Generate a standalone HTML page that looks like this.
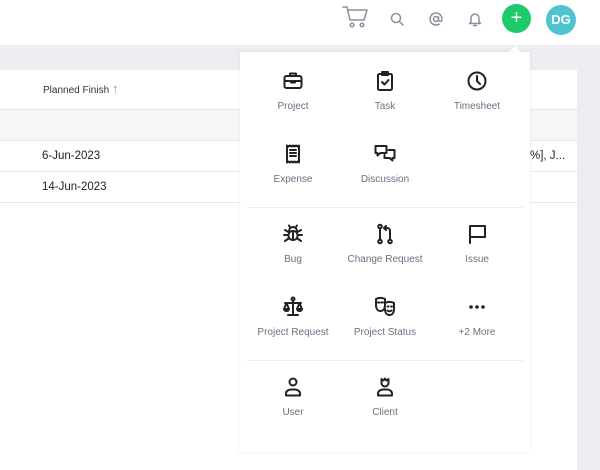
<!DOCTYPE html>
<html><head><meta charset="utf-8"><style>
*{margin:0;padding:0;box-sizing:border-box}
body{width:600px;height:433px;overflow:hidden;background:#ececf1;font-family:"Liberation Sans",sans-serif;position:relative}
.hdr{position:absolute;left:0;top:0;width:600px;height:45px;background:#fff}
.panel{position:absolute;left:0;top:70px;width:577px;height:400px;background:#fff}
.row{position:absolute;left:0;width:577px;border-bottom:1px solid #e6e6ec;font-size:11.5px;color:#222}
.dd{position:absolute;left:240px;top:52px;width:290px;height:400px;background:#fff;box-shadow:0 0 3px rgba(0,0,0,.08)}
.arrow{position:absolute;left:508px;top:46px;width:0;height:0;border-left:7px solid transparent;border-right:7px solid transparent;border-bottom:7px solid #fff}
.it{position:absolute;width:92px;text-align:center;font-size:10px;color:#6b7080}
.it svg{display:block;margin:0 auto 9px;width:22px;height:22px}
.sep{position:absolute;left:7px;width:276px;height:1px;background:#ececf2}
svg{fill:none;stroke:#222;stroke-width:2;stroke-linecap:round;stroke-linejoin:round}
</style></head><body>
<div class="hdr">
<svg style="position:absolute;left:342px;top:5px;width:27px;height:24px;stroke:#8a8f9e;stroke-width:1.5" viewBox="0 0 27 24"><path d="M1 2h4l3 13h14l3-10H7"/><circle cx="10" cy="20" r="1.8"/><circle cx="20" cy="20" r="1.8"/></svg>
<svg style="position:absolute;left:390px;top:12px;width:14px;height:14px;stroke:#8a8f9e;stroke-width:1.5" viewBox="0 0 14 14"><circle cx="6" cy="6" r="4.5"/><path d="M9.5 9.5L13 13"/></svg>
<svg style="position:absolute;left:429px;top:12px;width:14px;height:14px;stroke:#8a8f9e;stroke-width:1.5" viewBox="0 0 14 14"><circle cx="7" cy="7" r="2.5"/><path d="M9.5 5v3a1.8 1.8 0 0 0 3.5 0V7A6 6 0 1 0 10 12.2"/></svg>
<svg style="position:absolute;left:468px;top:11px;width:14px;height:16px;stroke:#8a8f9e;stroke-width:1.5" viewBox="0 0 14 16"><path d="M3 11V7a4 4 0 0 1 8 0v4l1.5 1.5h-11z"/><path d="M5.5 14.5h3"/></svg>
<div style="position:absolute;left:502px;top:4px;width:29px;height:29px;border-radius:50%;background:#1ecb6b;color:#fff;text-align:center;line-height:28px;font-size:20px;font-weight:300">+</div>
<div style="position:absolute;left:546px;top:5px;width:30px;height:30px;border-radius:50%;background:#4fc3d0;color:#fff;text-align:center;line-height:30px;font-size:13px;font-weight:bold">DG</div>
</div>
<div class="panel"></div>
<div class="row" style="top:70px;height:40px"><span style="position:absolute;left:43px;top:11px;font-size:10px;color:#333">Planned Finish <span style="color:#999;font-size:13px">↑</span></span></div>
<div class="row" style="top:110px;height:31px;background:#f6f6f9"></div>
<div class="row" style="top:141px;height:31px"><span style="position:absolute;left:42px;top:9px">6-Jun-2023</span><span style="position:absolute;left:530px;top:9px">%], J...</span></div>
<div class="row" style="top:172px;height:31px"><span style="position:absolute;left:42px;top:9px">14-Jun-2023</span></div>
<div class="arrow"></div>
<div class="dd">
<div class="it" style="left:7px;top:18px"><svg viewBox="0 0 22 22"><rect x="2.5" y="6" width="17" height="12" rx="2"/><path d="M8 6V3.5h6V6M2.5 11h17M9 11v1.5h4V11"/></svg>Project</div>
<div class="it" style="left:99px;top:18px"><svg viewBox="0 0 22 22"><rect x="4" y="4" width="14" height="16" rx="1.5"/><rect x="8" y="2" width="6" height="3"/><path d="M8 12l2.5 2.5L14.5 10"/></svg>Task</div>
<div class="it" style="left:191px;top:18px"><svg viewBox="0 0 22 22"><circle cx="11" cy="11" r="8.5"/><path d="M11 6v5l3 3"/></svg>Timesheet</div>
<div class="it" style="left:7px;top:91px"><svg viewBox="0 0 22 22"><path d="M5 2.5l1.5 1 1.5-1 1.5 1 1.5-1 1.5 1 1.5-1 1.5 1 1.5-1v17l-1.5-1-1.5 1-1.5-1-1.5 1-1.5-1-1.5 1-1.5-1-1.5 1z"/><path d="M8 7h6M8 10h6M8 13h6"/></svg>Expense</div>
<div class="it" style="left:99px;top:91px"><svg viewBox="0 0 22 22"><path d="M1.5 3h11v7h-6l-3 2.5V10h-2z"/><path d="M14.5 7h6v8h-2v2.5l-3-2.5h-5v-3"/></svg>Discussion</div>
<div class="sep" style="top:155px"></div>
<div class="it" style="left:7px;top:171px"><svg viewBox="0 0 22 22"><path d="M7 8a4 4 0 0 1 8 0"/><rect x="6.5" y="8" width="9" height="9" rx="4"/><path d="M11 8v9M2 12h4.5M15.5 12H20M3 7l3.5 2M19 7l-3.5 2M3 18l3.5-2.5M19 18l-3.5-2.5M8 4L7 2.5M14 4l1-1.5"/></svg>Bug</div>
<div class="it" style="left:99px;top:171px"><svg viewBox="0 0 22 22"><circle cx="6" cy="3.5" r="1.8"/><circle cx="6" cy="18.5" r="1.8"/><circle cx="16" cy="18.5" r="1.8"/><path d="M6 5.5v11M16 16.5V8a3 3 0 0 0-3-3h-3M12 3l-2 2 2 2"/></svg>Change Request</div>
<div class="it" style="left:191px;top:171px"><svg viewBox="0 0 22 22"><path d="M4 20V3h15v11H4"/></svg>Issue</div>
<div class="it" style="left:7px;top:244px"><svg viewBox="0 0 22 22"><circle cx="11" cy="3" r="1.5"/><path d="M11 4.5V19M6 19h10M3 7h16M4.5 7L2 13h5zM17.5 7L15 13h5zM2 13a2.5 2 0 0 0 5 0M15 13a2.5 2 0 0 0 5 0"/></svg>Project Request</div>
<div class="it" style="left:99px;top:244px"><svg viewBox="0 0 22 22"><path d="M2 3c3-1.5 6-1.5 9 0v6c0 4-2 6-4.5 6S2 13 2 9z"/><path d="M11 7c3-1.5 6-1.5 9 0v6c0 4-2 6-4.5 6S11 17 11 13"/><path d="M13.5 14.5a3 3 0 0 0 4 0M13.5 10.5h1M17 10.5h1M4 6.5h1.5M7.5 6.5H9"/></svg>Project Status</div>
<div class="it" style="left:191px;top:244px"><svg viewBox="0 0 22 22" style="fill:#222;stroke:none"><circle cx="5" cy="11" r="1.8"/><circle cx="11" cy="11" r="1.8"/><circle cx="17" cy="11" r="1.8"/></svg>+2 More</div>
<div class="sep" style="top:308px"></div>
<div class="it" style="left:7px;top:324px"><svg viewBox="0 0 22 22"><circle cx="11" cy="6" r="3.5"/><path d="M4 19.5v-2a5 4 0 0 1 5-4h4a5 4 0 0 1 5 4v2z"/></svg>User</div>
<div class="it" style="left:99px;top:324px"><svg viewBox="0 0 22 22"><path d="M7.5 3l2 1.5L11 2.5l1.5 2L14.5 3v4a3.5 3.5 0 0 1-7 0z"/><path d="M4 19.5v-2a5 4 0 0 1 5-4h4a5 4 0 0 1 5 4v2z"/></svg>Client</div>
</div>
</body></html>
